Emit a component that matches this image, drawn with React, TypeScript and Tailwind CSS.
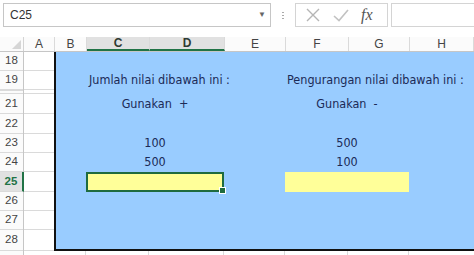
import React from 'react';

const rowHeaders = [
  { label: '18', h: 'h-[19px]' },
  { label: '19', h: 'h-[19px]' },
  { label: '', h: 'h-[4px]', hidden: true },
  { label: '21', h: 'h-[20px]' },
  { label: '22', h: 'h-[20px]' },
  { label: '23', h: 'h-[19px]' },
  { label: '24', h: 'h-[19px]' },
  { label: '25', h: 'h-[20px]', active: true },
  { label: '26', h: 'h-[19px]' },
  { label: '27', h: 'h-[19px]' },
  { label: '28', h: 'h-[21px]' },
  { label: '', h: 'h-[20px]' },
];

const columns = [
  { label: 'A', w: 'w-[31px]' },
  { label: 'B', w: 'w-[32px]' },
  { label: 'C', w: 'w-[63px]', active: true },
  { label: 'D', w: 'w-[75px]', active: true },
  { label: 'E', w: 'w-[61px]' },
  { label: 'F', w: 'w-[63px]' },
  { label: 'G', w: 'w-[61px]' },
  { label: 'H', w: 'flex-1' },
];

const cellText = "text-[12.5px] text-[#1b2a57] font-['DejaVu_Sans_Condensed','DejaVu_Sans',sans-serif] whitespace-pre flex items-center";

const App: React.FC = () => {
  return (
    <div className="w-[474px] h-[255px] overflow-hidden bg-white font-['Liberation_Sans',Arial,sans-serif] text-[#444]">
      {/* formula bar */}
      <div className="flex h-[27px] pt-[3px]">
        <div className="ml-[3px] w-[268px] h-[24px] border border-[#c6c6c6] flex items-center justify-between pl-[6px] pr-[4px]">
          <span className="text-[12px] text-[#333]">C25</span>
          <span className="text-[8px] text-[#666]">▼</span>
        </div>
        <div className="w-[24px] flex flex-col items-center justify-center gap-[2px]">
          <span className="w-[2px] h-[1px] bg-[#aaa]" />
          <span className="w-[2px] h-[1px] bg-[#aaa]" />
          <span className="w-[2px] h-[1px] bg-[#aaa]" />
        </div>
        <div className="w-[93px] h-[24px] border border-[#d4d4d4] flex items-center pl-[9px]">
          <svg width="16" height="14" viewBox="0 0 16 14" className="mr-[12px]">
            <path d="M2 1 L14 13 M14 1 L2 13" stroke="#b5b5b5" strokeWidth="1.4" fill="none" />
          </svg>
          <svg width="16" height="14" viewBox="0 0 16 14" className="mr-[12px]">
            <path d="M1 8 L6 12.5 L15 2" stroke="#c2c2c2" strokeWidth="1.6" fill="none" />
          </svg>
          <span className="font-['Liberation_Serif',serif] italic text-[16px] text-[#555] leading-none">fx</span>
        </div>
        <div className="ml-[3px] flex-1 h-[24px] border border-[#d4d4d4] border-r-0" />
      </div>

      <div className="h-[10px]" />

      {/* column headers */}
      <div className="flex h-[15px] bg-[#fbfbfb] border-b border-[#c6c6c6] text-[12px] leading-none">
        <div className="w-[24px] border-r border-[#d4d4d4] flex items-end justify-end pr-[2px] pb-[2px]">
          <svg width="9" height="9" viewBox="0 0 9 9">
            <path d="M9 0 L9 9 L0 9 Z" fill="#d6d6d6" />
          </svg>
        </div>
        {columns.map((c) => (
          <div
            key={c.label}
            className={`${c.w} flex items-center justify-center border-r border-[#dadada] ${
              c.active ? 'bg-[#e1e1e1] border-b-2 border-b-[#217346] text-[#2f3a33] font-semibold' : ''
            }`}
          >
            {c.label}
          </div>
        ))}
      </div>

      {/* sheet body */}
      <div className="flex">
        <div className="w-[24px] flex flex-col border-r border-[#c6c6c6] bg-[#fbfbfb]">
          {rowHeaders.map((r, i) => (
            <div
              key={i}
              className={`${r.h} shrink-0 flex items-center justify-center text-[11.5px] border-b border-[#dadada] ${
                r.hidden ? 'border-t border-t-[#dadada]' : ''
              } ${r.active ? 'bg-[#e1e1e1] text-[#217346] font-bold border-r-2 border-r-[#217346] -mr-px' : ''}`}
            >
              {r.label}
            </div>
          ))}
        </div>

        <div className="w-[31px] flex flex-col">
          {rowHeaders.map((r, i) => (
            <div key={i} className={`${r.h} shrink-0 border-b border-[#dadada]`} />
          ))}
        </div>

        <div className="flex-1 flex flex-col">
          <div className="h-[199px] bg-[#99ccff] border-l-2 border-b-2 border-[#111] -ml-px grid grid-cols-[30px_63px_75px_61px_63px_61px_1fr] grid-rows-[19px_19px_4px_20px_20px_19px_19px_20px_19px_19px_19px]">
            <div className={`${cellText} col-start-2 row-start-2 pl-[3px]`}>Jumlah nilai dibawah ini :</div>
            <div className={`${cellText} col-start-5 row-start-2 pl-[2px]`}>Pengurangan nilai dibawah ini :</div>

            <div className={`${cellText} col-start-2 col-span-2 row-start-4 justify-center`}>Gunakan  +</div>
            <div className={`${cellText} col-start-5 col-span-2 row-start-4 justify-center`}>Gunakan  -</div>

            <div className={`${cellText} col-start-2 col-span-2 row-start-6 justify-center`}>100</div>
            <div className={`${cellText} col-start-5 col-span-2 row-start-6 justify-center`}>500</div>

            <div className={`${cellText} col-start-2 col-span-2 row-start-7 justify-center`}>500</div>
            <div className={`${cellText} col-start-5 col-span-2 row-start-7 justify-center`}>100</div>

            <div className="col-start-2 col-span-2 row-start-8 bg-[#ffff99] border-2 border-[#1f6b3f] relative">
              <span className="absolute -right-[4px] -bottom-[4px] w-[5px] h-[5px] bg-[#1f6b3f] border border-white box-content" />
            </div>
            <div className="col-start-5 col-span-2 row-start-8 bg-[#ffff99]" />
          </div>
          <div className="flex h-[20px]">
            <div className="w-[31px] border-r border-[#dadada]" />
            <div className="w-[63px] border-r border-[#dadada]" />
            <div className="w-[75px] border-r border-[#dadada]" />
            <div className="w-[61px] border-r border-[#dadada]" />
            <div className="w-[63px] border-r border-[#dadada]" />
            <div className="w-[61px] border-r border-[#dadada]" />
          </div>
        </div>
      </div>
    </div>
  );
};

export default App;
